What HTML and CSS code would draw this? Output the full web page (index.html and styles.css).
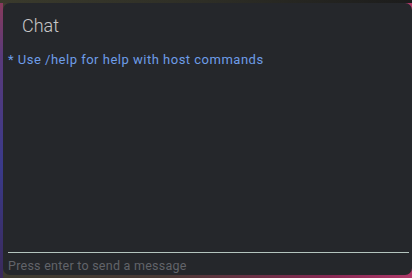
FILE: index.html
```html
<!DOCTYPE html>
<html>
<head>
<meta charset="utf-8">
<link rel="stylesheet" href="styles.css">
</head>
<body>
<div class="chat">
  <div class="chat-title">Chat</div>
  <div class="chat-log">
    <div class="msg system">* Use /help for help with host commands</div>
  </div>
  <div class="chat-input">Press enter to send a message</div>
</div>
</body>
</html>
```
FILE: styles.css
```css
html, body {
  margin: 0;
  padding: 0;
  width: 412px;
  height: 278px;
  overflow: hidden;
}
body {
  background:
    linear-gradient(90deg, #3a3a2c 0%, #2e2e26 50%, #1c1c1c 100%) top / 100% 3px no-repeat,
    linear-gradient(180deg, #8a3a5a 0%, #5a3a7a 20%, #3a3a8a 60%, #3a2a5a 100%) left / 3px 100% no-repeat,
    linear-gradient(90deg, #3e3b30 0%, #4a3a35 40%, #8a2a55 80%, #b03a6a 100%);
  font-family: Roboto, "Noto Sans", sans-serif;
}
.chat {
  box-sizing: border-box;
  margin: 3px 0 0 3px;
  height: 272px;
  width: 409px;
  background: #25272b;
  border-radius: 7px;
  display: flex;
  flex-direction: column;
  padding: 0 3px 0 5px;
}
.chat-title {
  color: #c8c8c8;
  font-size: 18px;
  font-weight: 300;
  padding: 11px 0 0 14px;
  line-height: 24px;
  height: 24px;
}
.chat-log {
  flex: 1;
  padding-top: 14px;
}
.msg {
  font-size: 13px;
  line-height: 16px;
  letter-spacing: 0.5px;
}
.system {
  color: #6e9de8;
}
.chat-input {
  border-top: 1px solid #b4c4be;
  color: #62646a;
  font-size: 12.5px;
  letter-spacing: 0.25px;
  line-height: 18px;
  height: 18px;
  padding-top: 4px;
}
```
